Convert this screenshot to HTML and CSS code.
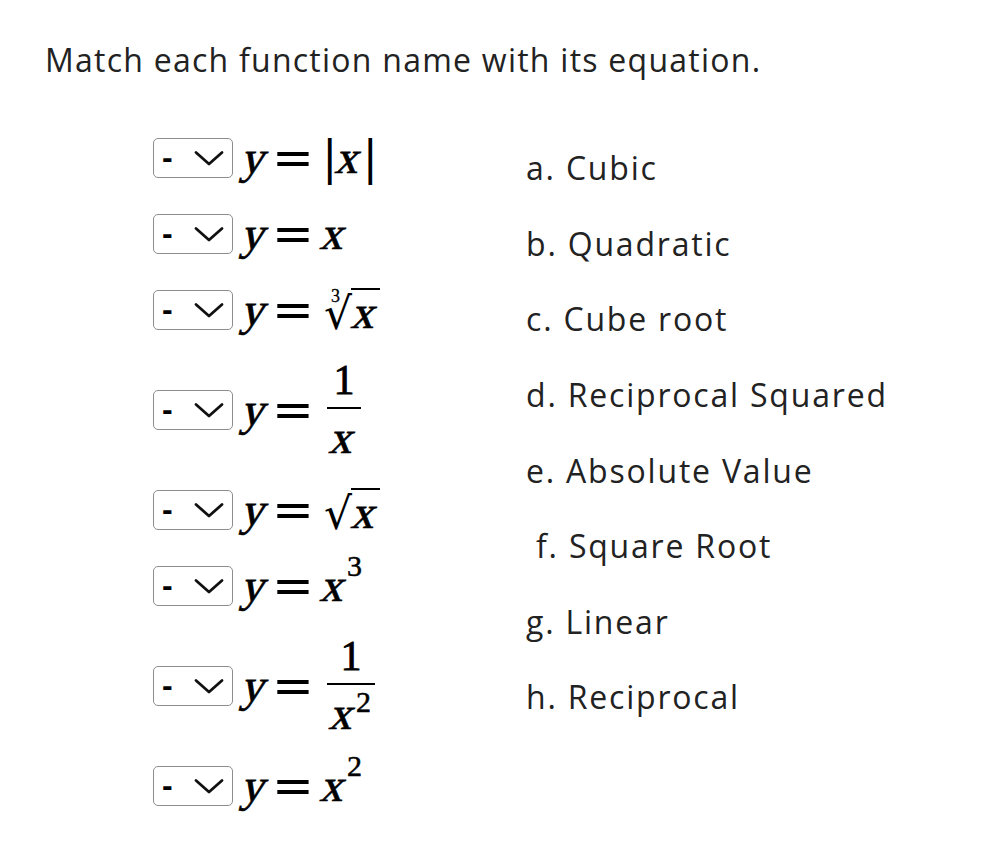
FILE: index.html
```html
<!DOCTYPE html>
<html lang="en">
<head>
<meta charset="utf-8">
<title>Match functions</title>
<link rel="stylesheet" href="styles.css">
</head>
<body>
<main class="page">
  <h1 class="title">Match each function name with its equation.</h1>
  <div class="match">
    <div class="eqs">
      <div class="row">
        <span class="sel"><select><option>-</option></select><svg class="chev" width="30" height="17" viewBox="0 0 30 17"><path d="M2 2.5 L15 14 L28 2.5" fill="none" stroke="#111" stroke-width="2.8" stroke-linecap="round" stroke-linejoin="round"/></svg></span>
        <span class="math"><span class="mi">y</span><span class="mo">=</span><span class="bar">|</span><span class="mi">x</span><span class="bar">|</span></span>
      </div>
      <div class="row">
        <span class="sel"><select><option>-</option></select><svg class="chev" width="30" height="17" viewBox="0 0 30 17"><path d="M2 2.5 L15 14 L28 2.5" fill="none" stroke="#111" stroke-width="2.8" stroke-linecap="round" stroke-linejoin="round"/></svg></span>
        <span class="math"><span class="mi">y</span><span class="mo">=</span><span class="mi">x</span></span>
      </div>
      <div class="row">
        <span class="sel"><select><option>-</option></select><svg class="chev" width="30" height="17" viewBox="0 0 30 17"><path d="M2 2.5 L15 14 L28 2.5" fill="none" stroke="#111" stroke-width="2.8" stroke-linecap="round" stroke-linejoin="round"/></svg></span>
        <span class="math"><span class="mi">y</span><span class="mo">=</span><span class="root"><span class="index">3</span><span class="rad">√</span><span class="radicand"><span class="mi">x</span></span></span></span>
      </div>
      <div class="row tall">
        <span class="sel"><select><option>-</option></select><svg class="chev" width="30" height="17" viewBox="0 0 30 17"><path d="M2 2.5 L15 14 L28 2.5" fill="none" stroke="#111" stroke-width="2.8" stroke-linecap="round" stroke-linejoin="round"/></svg></span>
        <span class="math"><span class="mi">y</span><span class="mo">=</span><span class="frac"><span class="num">1</span><span class="den"><span class="mi">x</span></span></span></span>
      </div>
      <div class="row">
        <span class="sel"><select><option>-</option></select><svg class="chev" width="30" height="17" viewBox="0 0 30 17"><path d="M2 2.5 L15 14 L28 2.5" fill="none" stroke="#111" stroke-width="2.8" stroke-linecap="round" stroke-linejoin="round"/></svg></span>
        <span class="math"><span class="mi">y</span><span class="mo">=</span><span class="root"><span class="rad">√</span><span class="radicand"><span class="mi">x</span></span></span></span>
      </div>
      <div class="row">
        <span class="sel"><select><option>-</option></select><svg class="chev" width="30" height="17" viewBox="0 0 30 17"><path d="M2 2.5 L15 14 L28 2.5" fill="none" stroke="#111" stroke-width="2.8" stroke-linecap="round" stroke-linejoin="round"/></svg></span>
        <span class="math"><span class="mi">y</span><span class="mo">=</span><span class="mi">x</span><span class="sup">3</span></span>
      </div>
      <div class="row tall">
        <span class="sel"><select><option>-</option></select><svg class="chev" width="30" height="17" viewBox="0 0 30 17"><path d="M2 2.5 L15 14 L28 2.5" fill="none" stroke="#111" stroke-width="2.8" stroke-linecap="round" stroke-linejoin="round"/></svg></span>
        <span class="math"><span class="mi">y</span><span class="mo">=</span><span class="frac wide"><span class="num">1</span><span class="den"><span class="mi">x</span><span class="sup">2</span></span></span></span>
      </div>
      <div class="row">
        <span class="sel"><select><option>-</option></select><svg class="chev" width="30" height="17" viewBox="0 0 30 17"><path d="M2 2.5 L15 14 L28 2.5" fill="none" stroke="#111" stroke-width="2.8" stroke-linecap="round" stroke-linejoin="round"/></svg></span>
        <span class="math"><span class="mi">y</span><span class="mo">=</span><span class="mi">x</span><span class="sup">2</span></span>
      </div>
    </div>
    <ol class="opts">
      <li>a. Cubic</li>
      <li>b. Quadratic</li>
      <li>c. Cube root</li>
      <li>d. Reciprocal Squared</li>
      <li>e. Absolute Value</li>
      <li class="indent">f. Square Root</li>
      <li>g. Linear</li>
      <li>h. Reciprocal</li>
    </ol>
  </div>
</main>
</body>
</html>
```

FILE: styles.css
```css
html, body {
  margin: 0;
  background: #ffffff;
}
body {
  font-family: "Open Sans", "DejaVu Sans", sans-serif;
  color: #222222;
}
.page {
  padding: 40px 0 0 45px;
}
.title {
  margin: 0;
  font-size: 32px;
  font-weight: 400;
  line-height: 40px;
  letter-spacing: 1.25px;
  color: #222222;
}
.match {
  display: flex;
  margin-top: 40px;
}
.eqs {
  width: 373px;
  padding-left: 108px;
  flex: none;
}
.row {
  display: flex;
  align-items: center;
  gap: 10px;
  height: 76px;
}
.row.tall {
  height: 124px;
}
.sel {
  position: relative;
  width: 80px;
  height: 40px;
  flex: none;
}
.sel select {
  -webkit-appearance: none;
  appearance: none;
  box-sizing: border-box;
  width: 100%;
  height: 100%;
  margin: 0;
  padding: 0 0 2px 8px;
  border: 1px solid #8d8d8d;
  border-radius: 5px;
  background: #ffffff;
  color: #000000;
  font-family: "Liberation Sans", Arial, sans-serif;
  font-size: 32px;
  font-weight: 700;
}
.chev {
  position: absolute;
  left: 41px;
  top: 12px;
  pointer-events: none;
}
.math {
  display: inline-flex;
  align-items: center;
  font-family: "Liberation Serif", "Times New Roman", serif;
  font-size: 42px;
  line-height: 1;
  color: #000000;
}
.mi {
  display: inline-block;
  font-family: "Liberation Serif", "Times New Roman", serif;
  font-size: 46px;
  font-style: normal;
  transform: skewX(-14deg);
  -webkit-text-stroke: 0.7px #000000;
  padding: 0 1px;
}
.mo {
  font-family: "DejaVu Serif", serif;
  font-size: 50px;
  margin: 0 8px 0 4px;
}
.bar {
  font-family: "DejaVu Serif", serif;
  font-size: 46px;
  margin: 0;
}
.root {
  position: relative;
  display: inline-flex;
  align-items: flex-end;
  padding-top: 4px;
  margin-left: 2px;
}
.rad {
  font-family: "DejaVu Serif", serif;
  font-size: 44px;
  margin-right: -1px;
}
.radicand {
  border-top: 2px solid #000000;
  padding: 0 2px 0 2px;
}
.index {
  position: absolute;
  left: 7px;
  top: 3px;
  font-size: 18px;
  -webkit-text-stroke: 0.3px #000000;
}
.frac {
  display: inline-flex;
  flex-direction: column;
  align-items: center;
  margin-left: 5px;
  min-width: 34px;
}
.frac.wide {
  min-width: 48px;
}
.num {
  padding-bottom: 6px;
  -webkit-text-stroke: 0.8px #000000;
}
.den {
  align-self: stretch;
  display: flex;
  justify-content: center;
  border-top: 2px solid #000000;
  padding-top: 6px;
}
.sup {
  font-size: 30px;
  align-self: flex-start;
  margin-top: -10px;
  margin-left: 0;
  -webkit-text-stroke: 0.5px #000000;
}
.den .sup {
  margin-top: -4px;
}
.opts {
  list-style: none;
  margin: 10px 0 0;
  padding: 0;
  font-size: 32px;
  letter-spacing: 1.8px;
  color: #222222;
}
.opts li {
  height: 75.6px;
  display: flex;
  align-items: center;
}
.opts li.indent {
  padding-left: 10px;
}
```
